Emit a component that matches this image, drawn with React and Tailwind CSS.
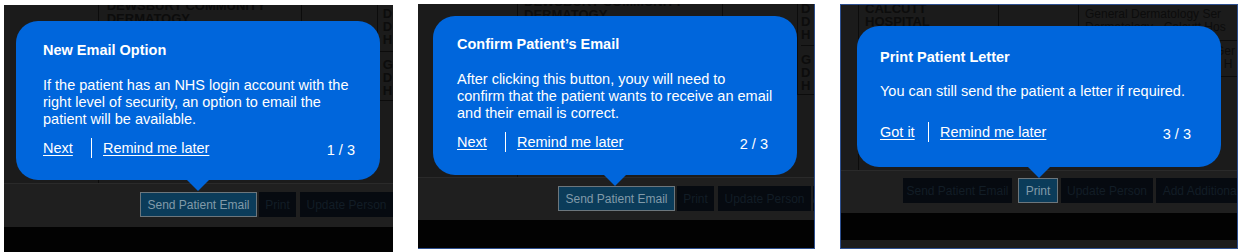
import React from 'react';

const font = { fontFamily: '"Liberation Sans", Arial, sans-serif' };

const Tour = ({ pos, pad, title, body, first, step, stepNudge, bodyGap, rowGap }) => (
  <div className={`absolute ${pos} w-[364px] rounded-[22px] bg-[#0066dc] text-white ${pad}`}>
    <div className="text-[14.5px] leading-[17px] font-bold">{title}</div>
    <div className={`${bodyGap} text-[14.5px] leading-[17px]`}>{body}</div>
    <div className={`${rowGap} flex items-center h-[20px] text-[14.5px] leading-[17px]`}>
      <span className="w-[48px] underline underline-offset-2">{first}</span>
      <span className="w-px h-[20px] bg-white" />
      <span className="ml-[11px] underline underline-offset-2">Remind me later</span>
      <span className={`ml-auto mt-[5px] ${stepNudge}`}>{step}</span>
    </div>
    <span className="absolute left-1/2 top-full -translate-x-1/2 w-0 h-0 border-l-[11px] border-r-[11px] border-t-[11px] border-l-transparent border-r-transparent border-t-[#0066dc]" />
  </div>
);

const Btn = ({ label, active, w }) => (
  <div
    className={`${w} h-[25px] shrink-0 flex items-center justify-center text-[12px] whitespace-nowrap overflow-hidden ${
      active
        ? 'bg-[#0b3c5a] border border-[#6c767c] text-[#819aa9]'
        : 'bg-[#060a10] text-[#121d26]'
    }`}
  >
    {label}
  </div>
);

const App = () => {
  return (
    <div className="w-[1241px] h-[252px] bg-white flex items-start overflow-hidden" style={font}>
      {/* panel 1 */}
      <div className="relative ml-[4px] mt-[5px] w-[389px] h-[247px] flex flex-col overflow-hidden">
        <div className="h-[178px] bg-[#1b1b1b] flex text-[#0c0c0c] font-bold text-[13px] leading-[13px] overflow-hidden">
          <div className="w-[94px]" />
          <div className="w-[204px] border-l border-[#0c0c0c] pl-[8px] -mt-[6px]">
            <div>DEWSBURY COMMUNITY</div>
            <div>DERMATOGY</div>
          </div>
          <div className="w-[76px] border-l border-[#0c0c0c] h-[96px] border-b" />
          <div className="flex-1 border-l border-[#0c0c0c] h-[96px] border-b flex flex-col pl-[5px]">
            <div className="pt-[2px] h-[47px] border-b border-[#0c0c0c] -ml-[5px] pl-[5px]">D<br />D<br />H</div>
            <div className="pt-[6px]">G<br />D<br />H</div>
          </div>
        </div>
        <div className="h-[44px] bg-[#1f1f1f] border-t border-[#2a2a2a] flex gap-[2px] pl-[136px] pt-[8px]">
          <Btn label="Send Patient Email" active w="w-[117px]" />
          <Btn label="Print" w="w-[37px]" />
          <div className="w-[2px]" />
          <Btn label="Update Person" w="w-[93px]" />
        </div>
        <div className="h-[25px] bg-[#020202]" />
        <Tour
          pos="left-[12px] top-[16px]"
          pad="pl-[27px] pr-[27px] pt-[21px] pb-[22px]"
          bodyGap="mt-[18px]"
          rowGap="mt-[10px]"
          title="New Email Option"
          body="If the patient has an NHS login account with the right level of security, an option to email the patient will be available."
          first="Next"
          step="1 / 3"
          stepNudge="mr-[-2px]"
        />
      </div>

      {/* panel 2 */}
      <div className="relative ml-[25px] mt-[4px] w-[397px] h-[245px] flex flex-col overflow-hidden border-b border-r border-[#2d4f8f]">
        <div className="h-[173px] bg-[#1b1b1b] flex text-[#0c0c0c] font-bold text-[13px] leading-[13px] overflow-hidden">
          <div className="w-[99px]" />
          <div className="w-[205px] border-l border-[#0c0c0c] pl-[6px] -mt-[9px]">
            <div>DEWSBURY COMMUNITY</div>
            <div>DERMATOGY</div>
          </div>
          <div className="w-[75px] border-l border-[#0c0c0c] h-[91px] border-b" />
          <div className="flex-1 border-l border-[#0c0c0c] h-[91px] border-b flex flex-col pl-[3px]">
            <div className="-mt-[2px] h-[44px] border-b border-[#0c0c0c]">D<br />D<br />H</div>
            <div className="pt-[7px]">G<br />D<br />H</div>
          </div>
        </div>
        <div className="h-[43px] bg-[#1f1f1f] border-t border-[#2a2a2a] flex gap-[2px] pl-[140px] pt-[8px]">
          <Btn label="Send Patient Email" active w="w-[117px]" />
          <Btn label="Print" w="w-[37px]" />
          <div className="w-[2px]" />
          <Btn label="Update Person" w="w-[93px]" />
          <Btn label="Add" w="w-[20px]" />
        </div>
        <div className="flex-1 bg-[#020202]" />
        <Tour
          pos="left-[15px] top-[12px]"
          pad="pl-[24px] pr-[22px] pt-[20px] pb-[23px]"
          bodyGap="mt-[18px]"
          rowGap="mt-[10px]"
          title="Confirm Patient’s Email"
          body="After clicking this button, youy will need to confirm that the patient wants to receive an email and their email is correct."
          first="Next"
          step="2 / 3"
          stepNudge="mr-[7px]"
        />
      </div>

      {/* panel 3 */}
      <div className="relative ml-[25px] mt-[4px] w-[398px] h-[245px] flex flex-col overflow-hidden border border-[#2d4f8f]">
        <div className="h-[165px] bg-[#1b1b1b] flex text-[#0c0c0c] text-[13px] leading-[13px] overflow-hidden">
          <div className="w-[17px]" />
          <div className="w-[140px] border-l border-[#0c0c0c] pl-[6px] -mt-[3px] font-bold">
            <div>CALCUTT</div>
            <div>HOSPITAL</div>
          </div>
          <div className="w-[80px] border-l border-[#0c0c0c] h-[72px]" />
          <div className="flex-1 border-l border-[#0c0c0c] h-[72px] border-b flex flex-col pl-[6px] text-[12px] leading-[13px] whitespace-nowrap overflow-hidden">
            <div className="pt-[3px] h-[36px] border-b border-[#0c0c0c] -ml-[6px] pl-[6px]">General Dermatology Ser<br />Dermatology - Calcutt Hos</div>
            <div className="pt-[4px] pl-[130px]">Ger<br />ll H</div>
          </div>
        </div>
        <div className="h-[43px] bg-[#1f1f1f] border-t border-[#2a2a2a] flex items-center gap-[3px] pl-[62px] pb-[3px]">
          <Btn label="Send Patient Email" w="w-[109px]" />
          <div className="w-[3px]" />
          <Btn label="Print" active w="w-[40px]" />
          <Btn label="Update Person" w="w-[92px]" />
          <Btn label="Add Additional" w="w-[90px]" />
        </div>
        <div className="h-[27px] bg-[#020202]" />
        <div className="flex-1 bg-[#1c1c1c]" />
        <Tour
          pos="left-[16px] top-[21px]"
          pad="pl-[23px] pr-[27px] pt-[23px] pb-[25px]"
          bodyGap="mt-[17px]"
          rowGap="mt-[22px]"
          title="Print Patient Letter"
          body="You can still send the patient a letter if required."
          first="Got it"
          step="3 / 3"
          stepNudge="mr-[3px]"
        />
      </div>
    </div>
  );
};

export default App;
